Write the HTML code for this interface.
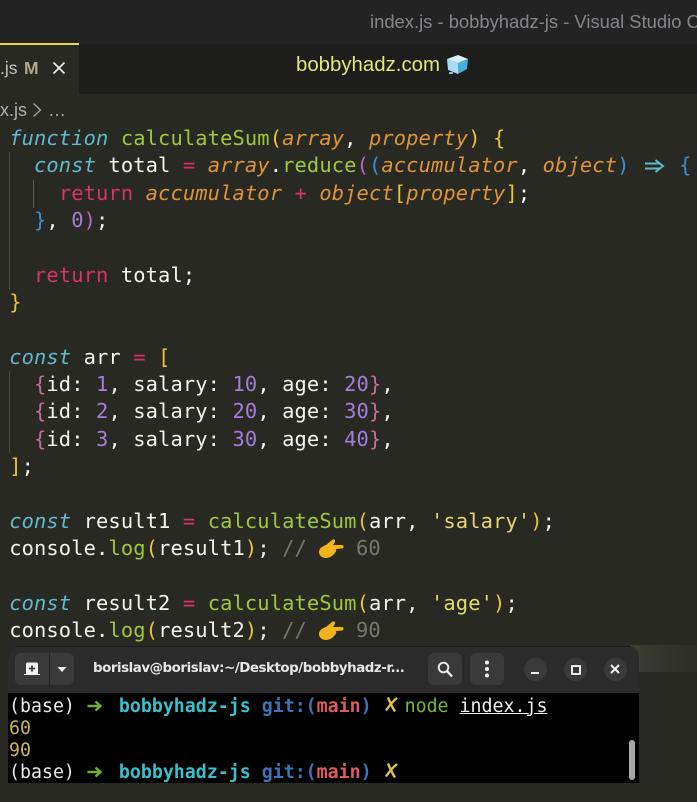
<!DOCTYPE html>
<html><head><meta charset="utf-8">
<style>
html,body{margin:0;padding:0;background:#282923}
#p{position:relative;width:697px;height:802px;overflow:hidden;background:#282923}
.a{position:absolute}
.l{position:absolute;left:9.2px;height:27px;line-height:27px;font-family:"DejaVu Sans Mono","Liberation Mono",monospace;font-size:20.4px;white-space:pre;color:#f4f4ef;letter-spacing:0.13px}
i{font-style:italic}
.c{color:#62b9cc}.g{color:#a0c63e}.o{color:#de9437}.p{color:#d4336c}.y{color:#e8c538}.b{color:#3a8fd4}.v{color:#a27fdc}.m{color:#b56ac8}.s{color:#e3d870}.d{color:#77776f}.r{color:#c96a9e}
.t{position:absolute;left:9px;height:22px;line-height:22px;font-family:"DejaVu Sans Mono","Liberation Mono",monospace;font-size:18.25px;white-space:pre;color:#e8e8e8}
.t b{font-weight:bold}
.btn{position:absolute;background:#3a3a3a;border-radius:6px}
.cir{position:absolute;width:23px;height:23px;border-radius:50%;background:#3a3a3a}
</style></head><body><div id="p">

<div class="a" style="left:0;top:0;width:697px;height:44px;background:#232323"></div>
<div class="a" style="left:370px;top:9px;font:18.4px/26px 'Liberation Sans',sans-serif;color:#84868a;white-space:pre">index.js - bobbyhadz-js - Visual Studio Code</div>

<div class="a" style="left:0;top:44px;width:697px;height:50px;background:#1d1d1b"></div>
<div class="a" style="left:0;top:43px;width:79px;height:51px;background:#282923"></div>
<div class="a" style="left:0;top:43px;width:79px;height:2px;background:#e6d84e"></div>
<div class="a" style="left:0;top:55px;font:17.5px/26px 'Liberation Sans',sans-serif;color:#c4c3b8;white-space:pre">.js</div>
<div class="a" style="left:24px;top:55px;font:bold 17.5px/26px 'Liberation Sans',sans-serif;color:#b5a68a">M</div>
<svg class="a" style="left:52px;top:61px" width="14" height="14" viewBox="0 0 14 14"><path d="M1.500 1.500L12.500 12.500M12.500 1.500L1.500 12.500" stroke="#f2f2f2" stroke-width="1.600"/></svg>

<div class="a" style="left:296px;top:52px;font:20.4px/26px 'Liberation Sans',sans-serif;color:#e4e67a;white-space:pre">bobbyhadz.com</div>
<svg class="a" style="left:446px;top:53px" width="23" height="23" viewBox="0 0 23 23"><path d="M1 6L12 2L22 6L12 10Z" fill="#d6f0fa"/><path d="M1 6L12 10L12 21L2 17Z" fill="#a9dcf3"/><path d="M12 10L22 6L21 16L12 21Z" fill="#48aee0"/><rect x="3" y="19" width="4" height="2" fill="#7cc4e8"/></svg>

<div class="a" style="left:0;top:97px;font:18px/26px 'Liberation Sans',sans-serif;color:#b0b0a8;white-space:pre">x.js</div>
<svg class="a" style="left:32px;top:102px" width="10" height="16" viewBox="0 0 10 16"><path d="M1.500 1.500L8.500 8L1.500 14.500" fill="none" stroke="#a8a8a0" stroke-width="1.300"/></svg>
<div class="a" style="left:48px;top:97px;font:18px/26px 'Liberation Sans',sans-serif;color:#a8a8a0">…</div>

<div class="a" style="left:9px;top:152px;width:1px;height:138px;background:#4a4a44"></div>
<div class="a" style="left:33px;top:180px;width:1px;height:28px;background:#5c5c56"></div>
<div class="a" style="left:9px;top:371px;width:1px;height:82px;background:#4a4a44"></div>

<div class="l" style="top:124.8px"><i class="c">function</i> <span class="g">calculateSum</span><span class="y">(</span><i class="o">array</i>, <i class="o">property</i><span class="y">)</span> <span class="y">{</span></div>
<div class="l" style="top:152.3px">  <i class="c">const</i> total <span class="p">=</span> <i class="o">array</i>.<span class="g">reduce</span><span class="m">(</span><span class="b">(</span><i class="o">accumulator</i>, <i class="o">object</i><span class="b">)</span>    <span class="b">{</span></div>
<svg class="a" style="left:644px;top:159px" width="21" height="14" viewBox="0 0 21 14"><path d="M1 4.500H16M1 9.500H16M11.500 1L19 7L11.500 13" fill="none" stroke="#62b9cc" stroke-width="2"/></svg>
<div class="l" style="top:179.8px">    <span class="p">return</span> <i class="o">accumulator</i> <span class="p">+</span> <i class="o">object</i><span class="y">[</span><i class="o">property</i><span class="y">]</span>;</div>
<div class="l" style="top:207.1px">  <span class="b">}</span>, <span class="v">0</span><span class="m">)</span>;</div>
<div class="l" style="top:261.8px">  <span class="p">return</span> total;</div>
<div class="l" style="top:289.1px"><span class="y">}</span></div>
<div class="l" style="top:343.8px"><i class="c">const</i> arr <span class="p">=</span> <span class="y">[</span></div>
<div class="l" style="top:371.1px">  <span class="r">{</span>id: <span class="v">1</span>, salary: <span class="v">10</span>, age: <span class="v">20</span><span class="r">}</span>,</div>
<div class="l" style="top:398.4px">  <span class="r">{</span>id: <span class="v">2</span>, salary: <span class="v">20</span>, age: <span class="v">30</span><span class="r">}</span>,</div>
<div class="l" style="top:425.8px">  <span class="r">{</span>id: <span class="v">3</span>, salary: <span class="v">30</span>, age: <span class="v">40</span><span class="r">}</span>,</div>
<div class="l" style="top:453.1px"><span class="y">]</span>;</div>
<div class="l" style="top:507.8px"><i class="c">const</i> result1 <span class="p">=</span> <span class="g">calculateSum</span><span class="y">(</span>arr, <span class="s">'salary'</span><span class="y">)</span>;</div>
<div class="l" style="top:535.1px">console.<span class="g">log</span><span class="y">(</span>result1<span class="y">)</span>; <span class="d">//</span></div>
<div class="l d" style="top:535.1px;left:356px">60</div>
<svg class="a" style="left:318px;top:539px" width="26" height="20" viewBox="0 0 26 20"><path d="M1 13C1 9 5 7 8 6L14 1C15 0 18 0 17 3L15 6L24 6C26 6 26 9.500 24 9.500L18 10C19 12 17 14 16 15C13 19 7 20 4 18C2 17 1 15 1 13Z" fill="#f2b418"/></svg>
<div class="l" style="top:589.8px"><i class="c">const</i> result2 <span class="p">=</span> <span class="g">calculateSum</span><span class="y">(</span>arr, <span class="s">'age'</span><span class="y">)</span>;</div>
<div class="l" style="top:617.1px">console.<span class="g">log</span><span class="y">(</span>result2<span class="y">)</span>; <span class="d">//</span></div>
<div class="l d" style="top:617.1px;left:356px">90</div>
<svg class="a" style="left:318px;top:621px" width="26" height="20" viewBox="0 0 26 20"><path d="M1 13C1 9 5 7 8 6L14 1C15 0 18 0 17 3L15 6L24 6C26 6 26 9.500 24 9.500L18 10C19 12 17 14 16 15C13 19 7 20 4 18C2 17 1 15 1 13Z" fill="#f2b418"/></svg>

<div class="a" style="left:630px;top:645px;width:67px;height:27px;background:linear-gradient(90deg,#3e3e33,#32332b 60%,#2c2d27)"></div>

<div class="a" style="left:8px;top:646px;width:631px;height:137px;background:#000;border-radius:12px 12px 0 0;overflow:hidden">
  <div class="a" style="left:0;top:0;width:631px;height:46px;background:#2b2b2b;border-top:1px solid #1a1a1a"></div>
</div>
<div class="btn" style="left:15px;top:653px;width:59px;height:32px"></div>
<div class="a" style="left:49px;top:653px;width:1px;height:32px;background:#252525"></div>
<svg class="a" style="left:23px;top:660px" width="18" height="18" viewBox="0 0 18 18"><path d="M1 14L3 14L3 4Q3 2.500 5 2.500L13 2.500Q15 2.500 15 4L15 14L17 14L17 15L1 15Z" fill="#f0f0f0"/><path d="M9 5.500V11.500M6 8.500H12" stroke="#3a3a3a" stroke-width="1.800"/></svg>
<svg class="a" style="left:56px;top:666px" width="12" height="7" viewBox="0 0 12 7"><path d="M1.500 1L10.500 1L6 6Z" fill="#ececec"/></svg>
<div class="a" style="left:93px;top:658px;font:bold 13.4px/22px 'DejaVu Sans','Liberation Sans',sans-serif;color:#e6e6e6;white-space:pre;letter-spacing:-0.46px">borislav@borislav:~/Desktop/bobbyhadz-r...</div>
<div class="btn" style="left:428px;top:653px;width:34px;height:32px"></div>
<svg class="a" style="left:436px;top:661px" width="18" height="17" viewBox="0 0 18 17"><circle cx="7.500" cy="6.500" r="4.800" fill="none" stroke="#eee" stroke-width="1.900"/><path d="M11 10L16 15.500" stroke="#eee" stroke-width="2.200"/></svg>
<div class="btn" style="left:470px;top:653px;width:34px;height:32px"></div>
<svg class="a" style="left:483px;top:660px" width="8" height="18" viewBox="0 0 8 18"><circle cx="4" cy="2.500" r="2" fill="#eee"/><circle cx="4" cy="9" r="2" fill="#eee"/><circle cx="4" cy="15.500" r="2" fill="#eee"/></svg>
<div class="cir" style="left:523.500px;top:657.500px"></div>
<div class="a" style="left:531px;top:672px;width:8px;height:2px;background:#f0f0f0"></div>
<div class="cir" style="left:563.500px;top:657.500px"></div>
<div class="a" style="left:570.500px;top:665px;width:6px;height:6px;border:2px solid #f0f0f0;border-radius:1px"></div>
<div class="cir" style="left:603.500px;top:657.500px"></div>
<svg class="a" style="left:610px;top:664px" width="10" height="10" viewBox="0 0 10 10"><path d="M1 1L9 9M9 1L1 9" stroke="#f0f0f0" stroke-width="2"/></svg>

<div class="t" style="top:695.500px">(base)    <b style="color:#38c0cc">bobbyhadz-js</b> <b style="color:#3f73b8">git:(</b><b style="color:#dc5c5c">main</b><b style="color:#3f73b8">)</b>   <span style="color:#6fb84a">node</span> <span style="text-decoration:underline;color:#f0f0f0">index.js</span></div>
<div class="t" style="top:717.500px;color:#c9b458">60</div>
<div class="t" style="top:739.500px;color:#c9b458">90</div>
<div class="t" style="top:761.500px">(base)    <b style="color:#38c0cc">bobbyhadz-js</b> <b style="color:#3f73b8">git:(</b><b style="color:#dc5c5c">main</b><b style="color:#3f73b8">)</b></div>
<svg class="a" style="left:87px;top:700px" width="16" height="12" viewBox="0 0 16 12"><path d="M0.500 6H13M8.500 1.500L13.500 6L8.500 10.500" fill="none" stroke="#6fb02e" stroke-width="2.400"/></svg>
<svg class="a" style="left:87px;top:766px" width="16" height="12" viewBox="0 0 16 12"><path d="M0.500 6H13M8.500 1.500L13.500 6L8.500 10.500" fill="none" stroke="#6fb02e" stroke-width="2.400"/></svg>
<svg class="a" style="left:384px;top:696px" width="15" height="17" viewBox="0 0 15 17"><path d="M4 1.500C6 6 8 11 11 15.500M13 2C8 6 5 10 2 14.500" fill="none" stroke="#e0c44a" stroke-width="2.400"/></svg>
<svg class="a" style="left:384px;top:762px" width="15" height="17" viewBox="0 0 15 17"><path d="M4 1.500C6 6 8 11 11 15.500M13 2C8 6 5 10 2 14.500" fill="none" stroke="#e0c44a" stroke-width="2.400"/></svg>
<div class="a" style="left:629px;top:740px;width:6px;height:40px;background:#a6a6a6;border-radius:3px"></div>
</div></body></html>
